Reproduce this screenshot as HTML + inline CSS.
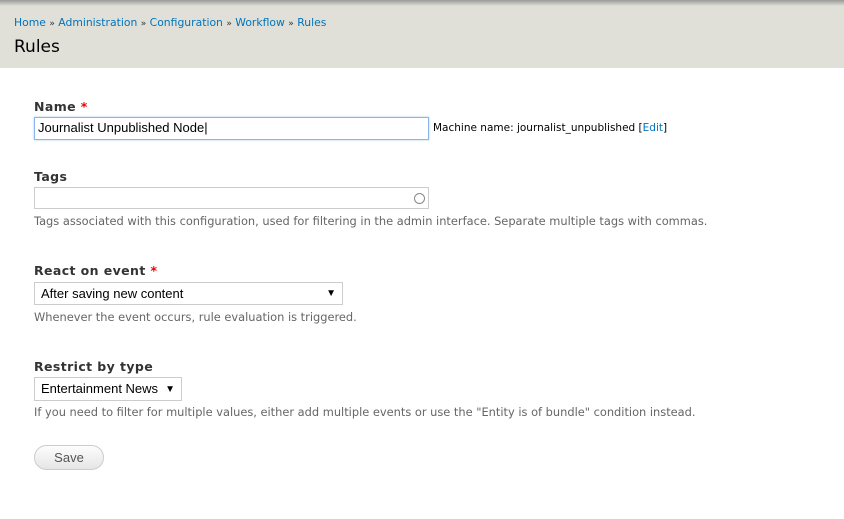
<!DOCTYPE html>
<html><head><style>
body{margin:0;width:844px;height:519px;background:#fff;font-family:"DejaVu Sans",sans-serif;color:#333;position:relative;overflow:hidden}
.hd{position:absolute;left:0;top:0;width:844px;height:68px;background:#e0e0d8}
.hd:before{content:"";position:absolute;left:0;top:0;width:100%;height:6px;background:linear-gradient(#999,#e0e0d8)}
.bc{position:absolute;left:14px;top:16px;font-size:10.8px;color:#0074bd;font-family:"DejaVu Sans",sans-serif}
.bc span{color:#333;font-size:9px}
h1{position:absolute;left:14px;top:37px;margin:0;font-weight:normal;font-size:17px;color:#000;font-family:"DejaVu Sans",sans-serif}
.a{position:absolute}
.lab{font-size:12.5px;font-weight:bold;color:#333;letter-spacing:.4px}
.lab b{color:#e00}
.desc{font-size:11.4px;color:#666}
.inp{border:1px solid #ccc;background:#fff;box-sizing:border-box;font-family:"Liberation Sans",sans-serif;font-size:13px;color:#000;padding:2px 3px}
.sel{border:1px solid #ccc;background:#fff;box-sizing:border-box;font-family:"Liberation Sans",sans-serif;font-size:13px;color:#000;padding:3px 6px}
</style></head><body>
<div class="hd"></div>
<div class="bc">Home <span>»</span> Administration <span>»</span> Configuration <span>»</span> Workflow <span>»</span> Rules</div>
<h1>Rules</h1>
<div class="a lab" style="left:34px;top:99px">Name <b>*</b></div>
<div class="a inp" style="left:34px;top:117px;width:395px;height:23px;border:1px solid #8ab4ec;box-shadow:0 0 2px #aac8f0">Journalist Unpublished Node|</div>
<div class="a" style="left:433px;top:122px;font-size:10.5px;color:#000">Machine name: journalist_unpublished [<span style="color:#0074bd">Edit</span>]</div>
<div class="a lab" style="left:34px;top:169px">Tags</div>
<div class="a inp" style="left:34px;top:187px;width:395px;height:22px"></div>
<div class="a" style="left:414px;top:193px;width:9px;height:9px;border:1px solid #888;border-radius:50%"></div>
<div class="a desc" style="left:34px;top:214px">Tags associated with this configuration, used for filtering in the admin interface. Separate multiple tags with commas.</div>
<div class="a lab" style="left:34px;top:263px">React on event <b>*</b></div>
<div class="a sel" style="left:34px;top:282px;width:309px;height:23px">After saving new content<span style="position:absolute;right:6px;top:5px;font-size:10px">▼</span></div>
<div class="a desc" style="left:34px;top:310px">Whenever the event occurs, rule evaluation is triggered.</div>
<div class="a lab" style="left:34px;top:359px">Restrict by type</div>
<div class="a sel" style="left:34px;top:377px;width:148px;height:24px">Entertainment News<span style="position:absolute;right:6px;top:6px;font-size:10px">▼</span></div>
<div class="a desc" style="left:34px;top:405px">If you need to filter for multiple values, either add multiple events or use the "Entity is of bundle" condition instead.</div>
<div class="a" style="left:34px;top:445px;width:70px;height:25px;box-sizing:border-box;border:1px solid #ccc;border-radius:13px;background:linear-gradient(#fdfdfd,#e6e6e6);font-family:'Liberation Sans',sans-serif;font-size:13px;color:#555;text-align:center;line-height:23px">Save</div>
</body></html>
